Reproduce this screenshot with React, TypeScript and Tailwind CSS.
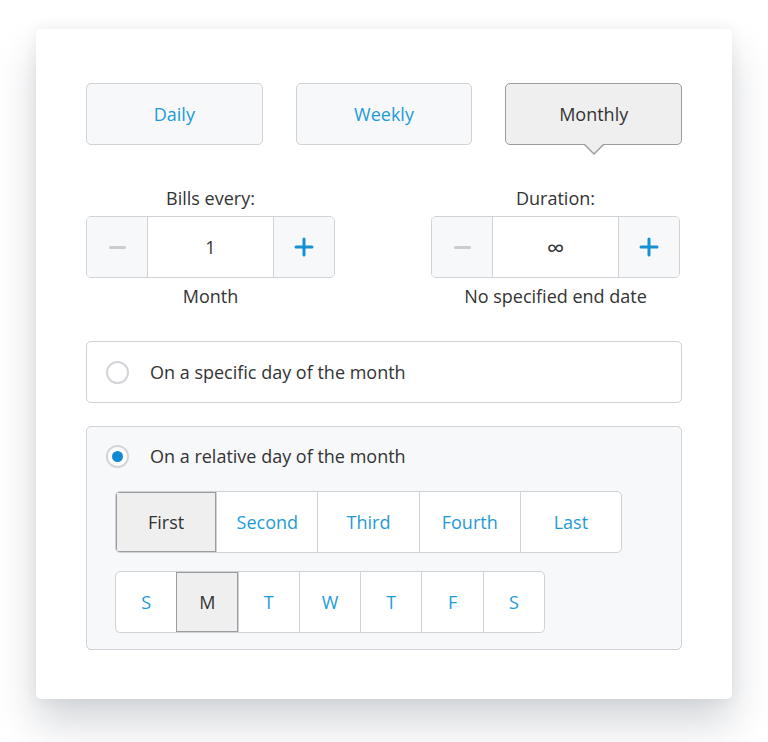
import React, { useState } from 'react';
import { clsx } from 'clsx';

const font = { fontFamily: '"Open Sans", Lato, sans-serif' };

function Stepper({ value, label }: { value: React.ReactNode; label: string }) {
    return (
        <div className="flex flex-col items-center w-[249px]">
            <div className="text-[18px] leading-6 text-[#333]">{label}</div>
            <div className="mt-[6px] flex w-full h-[62px] rounded-[5px] border border-[#cfd2d6] overflow-hidden">
                <button className="w-[61px] bg-[#f7f8fa] flex items-center justify-center border-r border-[#cfd2d6]">
                    <span className="block w-[17px] h-[3px] rounded-sm bg-[#c9ccd1]" />
                </button>
                <div className="flex-1 bg-white flex items-center justify-center text-[18px] text-[#333]">{value}</div>
                <button className="w-[61px] bg-[#f7f8fa] flex items-center justify-center border-l border-[#cfd2d6]">
                    <svg width="20" height="20" viewBox="0 0 20 20">
                        <path d="M10 2v16M2 10h16" stroke="#1590d3" strokeWidth="3" strokeLinecap="round" />
                    </svg>
                </button>
            </div>
        </div>
    );
}

function Radio({ checked }: { checked?: boolean }) {
    return (
        <span className="w-[23px] h-[23px] rounded-full border-2 border-[#d3d5d9] bg-white flex items-center justify-center shrink-0">
            {checked && <span className="w-[11px] h-[11px] rounded-full bg-[#0f8ad2]" />}
        </span>
    );
}

export default function App() {
    const [freq, setFreq] = useState('Monthly');
    const [ord, setOrd] = useState('First');
    const [day, setDay] = useState(1);
    const ords = ['First', 'Second', 'Third', 'Fourth', 'Last'];
    const days = ['S', 'M', 'T', 'W', 'T', 'F', 'S'];

    return (
        <div className="w-[768px] h-[742px] bg-white pt-[29px] pl-[36px]" style={font}>
            <div className="w-[696px] h-[670px] bg-white rounded-[5px] shadow-[0_24px_40px_rgba(40,50,70,0.2),0_0_14px_rgba(40,50,70,0.07)] pt-[54px] px-[50px]">
                {/* frequency tabs */}
                <div className="grid grid-cols-3 gap-x-[33px]">
                    {['Daily', 'Weekly', 'Monthly'].map((f) => (
                        <button
                            key={f}
                            onClick={() => setFreq(f)}
                            className={clsx(
                                'relative h-[62px] rounded-[5px] border text-[18px]',
                                freq === f
                                    ? 'bg-[#efefef] border-[#9a9ca0] text-[#333]'
                                    : 'bg-[#f7f8fa] border-[#cfd2d6] text-[#1e9bd7]'
                            )}
                        >
                            {f}
                            {freq === f && (
                                <span className="absolute left-1/2 -bottom-[11px] -ml-[10px] w-0 h-0 border-l-[10px] border-r-[10px] border-t-[10px] border-l-transparent border-r-transparent border-t-[#9a9ca0]">
                                    <span className="absolute -left-[9px] -top-[11px] w-0 h-0 border-l-[9px] border-r-[9px] border-t-[9px] border-l-transparent border-r-transparent border-t-[#efefef]" />
                                </span>
                            )}
                        </button>
                    ))}
                </div>

                {/* steppers */}
                <div className="mt-[41px] flex gap-[96px]">
                    <div className="flex flex-col items-center">
                        <Stepper value="1" label="Bills every:" />
                        <div className="mt-[6px] text-[18px] leading-6 text-[#333]">Month</div>
                    </div>
                    <div className="flex flex-col items-center">
                        <Stepper value={<span className="text-[25px] leading-none">∞</span>} label="Duration:" />
                        <div className="mt-[6px] text-[18px] leading-6 text-[#333]">No specified end date</div>
                    </div>
                </div>

                {/* specific day */}
                <div className="mt-[33px] h-[62px] rounded-[5px] border border-[#cfd2d6] bg-white flex items-center pl-[19px] gap-[21px]">
                    <Radio />
                    <span className="text-[18px] text-[#333]">On a specific day of the month</span>
                </div>

                {/* relative day */}
                <div className="mt-[23px] h-[224px] rounded-[5px] border border-[#cfd2d6] bg-[#f7f8fa] pl-[28px] pt-[16px]">
                    <div className="flex items-center gap-[21px] -ml-[9px]">
                        <Radio checked />
                        <span className="text-[18px] text-[#333]">On a relative day of the month</span>
                    </div>
                    <div className="mt-[21px] flex w-[507px] h-[62px] rounded-[5px] border border-[#cfd2d6] bg-white overflow-hidden">
                        {ords.map((o, i) => (
                            <button
                                key={o}
                                onClick={() => setOrd(o)}
                                className={clsx(
                                    'flex-1 text-[18px]',
                                    i > 0 && 'border-l border-[#cfd2d6]',
                                    ord === o ? 'bg-[#efefef] text-[#333] outline outline-1 outline-[#9a9ca0] -outline-offset-1' : 'text-[#1e9bd7]'
                                )}
                            >
                                {o}
                            </button>
                        ))}
                    </div>
                    <div className="mt-[18px] flex w-[430px] h-[62px] rounded-[5px] border border-[#cfd2d6] bg-white overflow-hidden">
                        {days.map((d, i) => (
                            <button
                                key={i}
                                onClick={() => setDay(i)}
                                className={clsx(
                                    'flex-1 text-[18px]',
                                    i > 0 && 'border-l border-[#cfd2d6]',
                                    day === i ? 'bg-[#efefef] text-[#333] outline outline-1 outline-[#9a9ca0] -outline-offset-1' : 'text-[#1e9bd7]'
                                )}
                            >
                                {d}
                            </button>
                        ))}
                    </div>
                </div>
            </div>
        </div>
    );
}
